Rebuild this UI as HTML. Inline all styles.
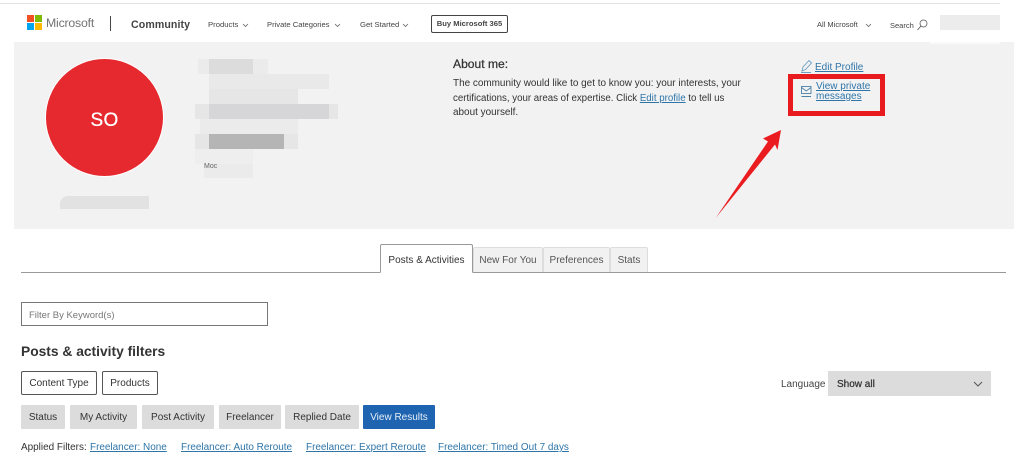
<!DOCTYPE html>
<html>
<head>
<meta charset="utf-8">
<style>
html,body{margin:0;padding:0;background:#fff}
#p{position:relative;width:1024px;height:465px;overflow:hidden;background:#fff;font-family:"Liberation Sans",sans-serif;color:#333;filter:blur(.35px)}
#p div,#p a.t{position:absolute;white-space:nowrap}
.t{line-height:14px}
a{color:#2f75a8;text-decoration:underline}
.btn{box-sizing:border-box;text-align:center;font-size:10px;top:405px;height:24px;line-height:26px;background:#dcdcdc;color:#333;border-radius:1px}
.ol{background:#fff;border:1px solid #555;border-radius:2px;top:371px;height:24px;line-height:24px}
.tab{box-sizing:border-box;background:#f1f1f1;border:1px solid #ddd;border-bottom:none;border-radius:2px 2px 0 0;height:25px;line-height:25px;font-size:10px;color:#555;text-align:center;top:247px}
.f{top:441px;font-size:9.95px}
.s{-webkit-text-stroke:.25px currentColor}
</style>
</head>
<body>
<div id="p">
<div style="left:0;top:3px;width:1000px;height:1px;background:#e2e2e2"></div>
<div style="left:14px;top:42px;width:1000px;height:187px;background:#f2f2f3"></div>
<div style="left:930px;top:42px;width:70px;height:2px;background:#fafafa"></div>

<!-- logo -->
<div style="left:27px;top:15px;width:7px;height:7px;background:#f25022"></div>
<div style="left:35px;top:15px;width:7px;height:7px;background:#7fba00"></div>
<div style="left:27px;top:23px;width:7px;height:7px;background:#00a4ef"></div>
<div style="left:35px;top:23px;width:7px;height:7px;background:#ffb900"></div>
<div class="t" style="left:46px;top:16px;font-size:12.3px;color:#737373;letter-spacing:-.2px">Microsoft</div>
<div style="left:110px;top:16px;width:1px;height:15px;background:#444"></div>
<div class="t" style="left:131px;top:18px;font-size:10.6px;font-weight:bold;color:#444;letter-spacing:.1px">Community</div>
<div class="t" style="left:208px;top:18px;font-size:7.7px;color:#444">Products</div>
<div class="t" style="left:267px;top:18px;font-size:7.6px;color:#444">Private Categories</div>
<div class="t" style="left:360px;top:18px;font-size:7.7px;color:#444">Get Started</div>
<div class="t" style="left:431px;top:15px;width:77px;height:18px;box-sizing:border-box;border:1px solid #444;border-radius:2px;background:#fff;font-size:7.6px;font-weight:bold;line-height:16px;text-align:center;color:#444">Buy Microsoft 365</div>
<div class="t" style="left:817px;top:18px;font-size:7.5px;color:#444">All Microsoft</div>
<div class="t" style="left:890px;top:19px;font-size:7.5px;color:#444">Search</div>
<div style="left:940px;top:15px;width:60px;height:15px;background:#ececec"></div>

<!-- avatar -->
<div style="left:45px;top:58px;width:119px;height:119px;border-radius:50%;background:#e6292e;border:1px solid #fff;box-sizing:border-box"></div>
<div class="t s" style="left:45px;top:111px;width:119px;text-align:center;color:#fff;font-size:19px;line-height:20px;letter-spacing:.3px">SO</div>

<!-- pixelated blur -->
<div style="left:198px;top:59px;width:70px;height:15px;background:#ebebec"></div>
<div style="left:209px;top:59px;width:44px;height:15px;background:#dcdcdd"></div>
<div style="left:209px;top:74px;width:120px;height:15px;background:#e9e9ea"></div>
<div style="left:209px;top:89px;width:89px;height:15px;background:#e6e6e7"></div>
<div style="left:195px;top:104px;width:143px;height:15px;background:#e6e6e7"></div>
<div style="left:209px;top:104px;width:120px;height:15px;background:#d6d6d8"></div>
<div style="left:200px;top:119px;width:98px;height:15px;background:#ebebec"></div>
<div style="left:195px;top:134px;width:103px;height:15px;background:#e6e6e7"></div>
<div style="left:209px;top:134px;width:75px;height:15px;background:#b6b5b6"></div>
<div style="left:195px;top:149px;width:58px;height:15px;background:#eeeeef"></div>
<div style="left:204px;top:164px;width:49px;height:14px;background:#ebebeb"></div>
<div class="t" style="left:204px;top:160px;font-size:7px;color:#666">Moc</div>
<div style="left:60px;top:196px;width:89px;height:13px;background:#e2e2e3;border-radius:8px 0 0 0"></div>

<svg style="position:absolute;left:0;top:0" width="1024" height="465" fill="none">
  <g stroke="#666" stroke-width=".8">
    <path d="M243 24l2.500 2.500 2.500-2.500"/>
    <path d="M335 24l2.500 2.500 2.500-2.500"/>
    <path d="M403 24l2.500 2.500 2.500-2.500"/>
    <path d="M866 24l2.500 2.500 2.500-2.500"/>
  </g>
  <circle cx="923.500" cy="23.500" r="3.500" stroke="#555" stroke-width=".8"/>
  <path d="M921 26l-3.500 4" stroke="#555" stroke-width=".8"/>
  <path d="M802 71l1-4 6-6.500 2.500 2.500-6 6.500zM801 72.500h10" stroke="#6f9fc0" stroke-width=".9"/>
  <rect x="801.500" y="86.500" width="9.500" height="7" stroke="#4a81a8" stroke-width=".9"/>
  <path d="M801.500 87.500l4.750 3.500 4.750-3.500M801.500 96.500h9.500" stroke="#4a81a8" stroke-width=".9"/>
  <rect x="790.500" y="76.500" width="92" height="37" stroke="#e81c1f" stroke-width="5"/>
  <path d="M715.700 218L768 141.500 763 138.500 781 130 777.500 150 775 144.500Z" fill="#ea1c1f"/>
</svg>

<!-- about -->
<div class="t s" style="left:453px;top:57px;font-size:12.100px;color:#333">About me:</div>
<div class="t" style="left:453px;top:77px;font-size:9.950px;color:#333">The community would like to get to know you: your interests, your</div>
<div class="t" style="left:453px;top:92px;font-size:9.700px;color:#333">certifications, your areas of expertise. Click <a href="#">Edit profile</a> to tell us</div>
<div class="t" style="left:453px;top:106px;font-size:9.950px;color:#333">about yourself.</div>
<a class="t" href="#" style="left:815px;top:61px;font-size:10px">Edit Profile</a>
<a class="t" href="#" style="left:816px;top:82px;font-size:10px;line-height:10px;white-space:normal;width:60px">View private messages</a>

<!-- tabs -->
<div style="left:21px;top:272px;width:985px;height:1px;background:#999"></div>
<div class="tab" style="left:380px;top:244px;width:93px;height:29px;background:#fff;border:1px solid #999;border-bottom:1px solid #fff;color:#333;line-height:31px">Posts &amp; Activities</div>
<div class="tab" style="left:473px;width:70px">New For You</div>
<div class="tab" style="left:543px;width:67px">Preferences</div>
<div class="tab" style="left:610px;width:38px">Stats</div>

<!-- filter -->
<div class="t" style="left:21px;top:302px;width:247px;height:24px;box-sizing:border-box;border:1px solid #777;font-size:9.500px;line-height:25px;padding-left:7px;color:#777">Filter By Keyword(s)</div>
<div class="t" style="left:21px;top:345px;font-size:13.8px;font-weight:bold;color:#333">Posts &amp; activity filters</div>

<div class="btn ol" style="left:21px;width:76px">Content Type</div>
<div class="btn ol" style="left:102px;width:56px">Products</div>

<div class="btn" style="left:21px;width:44px">Status</div>
<div class="btn" style="left:70px;width:67px">My Activity</div>
<div class="btn" style="left:142px;width:72px">Post Activity</div>
<div class="btn" style="left:219px;width:62px">Freelancer</div>
<div class="btn" style="left:285px;width:74px">Replied Date</div>
<div class="btn" style="left:363px;width:72px;background:#1f64b0;color:#e6eef8">View Results</div>

<div class="t f" style="left:21px;color:#333">Applied Filters:</div>
<a class="t f" href="#" style="left:90px">Freelancer: None</a>
<a class="t f" href="#" style="left:181px">Freelancer: Auto Reroute</a>
<a class="t f" href="#" style="left:306px">Freelancer: Expert Reroute</a>
<a class="t f" href="#" style="left:438px">Freelancer: Timed Out 7 days</a>

<!-- language -->
<div class="t" style="left:781px;top:378px;font-size:10px;color:#444">Language</div>
<div style="left:828px;top:371px;width:163px;height:25px;background:#dcdcdc"></div>
<div class="t s" style="left:837px;top:378px;font-size:10px;color:#333">Show all</div>
<svg style="position:absolute;left:0;top:0" width="1024" height="465" fill="none"><path d="M974 382l4 4 4-4" stroke="#555" stroke-width="1"/></svg>
</div>
</body>
</html>
